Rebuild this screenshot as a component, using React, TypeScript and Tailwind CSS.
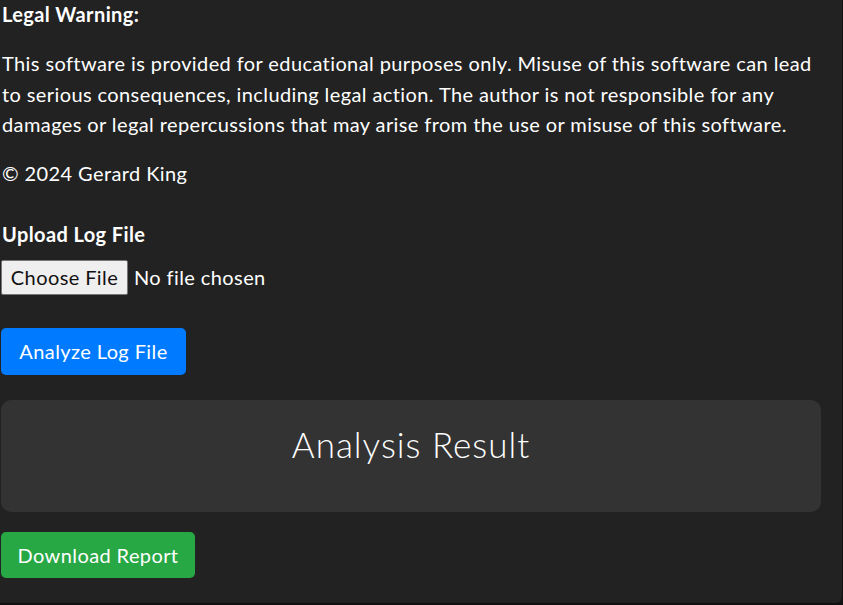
export default function App() {
  return (
    <div className="w-[843px] h-[605px] bg-[#111] overflow-hidden tracking-[0.4px]" style={{ fontFamily: "Lato, 'Noto Sans', sans-serif" }}>
      <div className="w-[842px] h-[603px] bg-[#222222] rounded-br-[6px] text-white">
        <div className="pl-[2px] w-[825px]">
          <div className="text-[20px] leading-[28px] font-bold">Legal Warning:</div>
          <p className="mt-[20px] text-[20px] leading-[30.5px]">
            This software is provided for educational purposes only. Misuse of this software can lead to serious consequences, including legal action. The author is not responsible for any damages or legal repercussions that may arise from the use or misuse of this software.
          </p>
          <p className="mt-[18px] text-[20px] leading-[30px]">© 2024 Gerard King</p>
          <div className="mt-[31px] text-[20px] leading-[30px] font-bold">Upload Log File</div>
        </div>
        <div className="mt-[11px] flex items-center">
          <div className="ml-[1px] w-[127px] h-[35px] bg-[#efefef] border border-[#767676] rounded-[2px] flex items-center justify-center text-[20px] text-[#111]">
            Choose File
          </div>
          <span className="ml-[6px] text-[20px]">No file chosen</span>
        </div>
        <button className="mt-[33px] ml-[1px] w-[185px] h-[47px] bg-[#007bff] rounded-[5px] text-[20px] text-white flex items-center justify-center">
          Analyze Log File
        </button>
        <div className="mt-[25px] ml-[1px] w-[820px] h-[112px] bg-[#333333] rounded-[10px] pt-[24px] text-center">
          <h2 className="text-[35px] leading-[40px] font-light tracking-[1px]">Analysis Result</h2>
        </div>
        <button className="mt-[20px] ml-[1px] w-[194px] h-[46px] bg-[#28a745] rounded-[5px] text-[20px] text-white flex items-center justify-center">
          Download Report
        </button>
      </div>
    </div>
  );
}
